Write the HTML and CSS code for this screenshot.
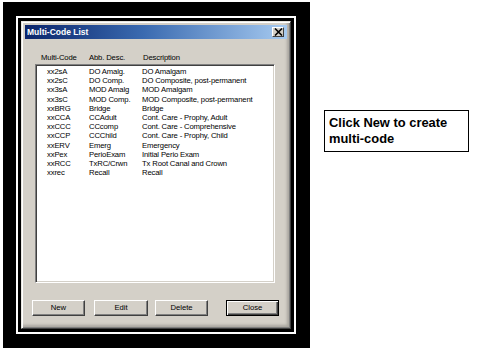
FILE: index.html
```html
<!DOCTYPE html>
<html>
<head>
<meta charset="utf-8">
<link rel="stylesheet" href="styles.css">
</head>
<body>
<div class="page">
  <div class="stage">
    <div class="whitebox">
      <div class="dialog">
        <div class="titlebar">
          <span class="title">Multi-Code List</span>
          <span class="xbtn"><svg width="9" height="8" viewBox="0 0 9 8"><path d="M1 0.5 L8 7.5 M8 0.5 L1 7.5" stroke="#000" stroke-width="1.6"/></svg></span>
        </div>
        <div class="headers">
          <span class="h1">Multi-Code</span>
          <span class="h2">Abb. Desc.</span>
          <span class="h3">Description</span>
        </div>
        <div class="list">
          <div class="row"><span>xx2sA</span><span>DO Amalg.</span><span>DO Amalgam</span></div>
          <div class="row"><span>xx2sC</span><span>DO Comp.</span><span>DO Composite, post-permanent</span></div>
          <div class="row"><span>xx3sA</span><span>MOD Amalg</span><span>MOD Amalgam</span></div>
          <div class="row"><span>xx3sC</span><span>MOD Comp.</span><span>MOD Composite, post-permanent</span></div>
          <div class="row"><span>xxBRG</span><span>Bridge</span><span>Bridge</span></div>
          <div class="row"><span>xxCCA</span><span>CCAdult</span><span>Cont. Care - Prophy, Adult</span></div>
          <div class="row"><span>xxCCC</span><span>CCcomp</span><span>Cont. Care - Comprehensive</span></div>
          <div class="row"><span>xxCCP</span><span>CCChild</span><span>Cont. Care - Prophy, Child</span></div>
          <div class="row"><span>xxERV</span><span>Emerg</span><span>Emergency</span></div>
          <div class="row"><span>xxPex</span><span>PerioExam</span><span>Initial Perio Exam</span></div>
          <div class="row"><span>xxRCC</span><span>TxRC/Crwn</span><span>Tx Root Canal and Crown</span></div>
          <div class="row"><span>xxrec</span><span>Recall</span><span>Recall</span></div>
        </div>
        <div class="buttons">
          <div class="btn b-new">New</div>
          <div class="btn b-edit">Edit</div>
          <div class="btn b-del">Delete</div>
          <div class="btn b-close">Close</div>
        </div>
      </div>
    </div>
  </div>
  <div class="callout">Click New to create<br>multi-code</div>
</div>
</body>
</html>
```

FILE: styles.css
```css
html, body {
  margin: 0;
  padding: 0;
  background: #fff;
}
.page {
  display: flex;
  align-items: flex-start;
}
.stage {
  margin: 2px 0 0 3px;
  width: 307px;
  height: 346px;
  background: #000;
  padding: 14px 0 0 13px;
  box-sizing: border-box;
}
.whitebox {
  width: 280px;
  height: 318px;
  border: 2px solid #fff;
  background: #000;
  padding: 3px;
  box-sizing: border-box;
}
.dialog {
  width: 270px;
  height: 308px;
  box-sizing: border-box;
  background: #d4d0c8;
  border-top: 1px solid #e8e6e0;
  border-left: 1px solid #e8e6e0;
  border-right: 1px solid #404040;
  border-bottom: 1px solid #404040;
  box-shadow: inset 1px 1px 0 #fff, inset -1px -1px 0 #808080, inset -3px -3px 3px #a8a59e;
  padding: 3px;
  font-family: "Liberation Sans", Arial, sans-serif;
  font-size: 7.7px;
  color: #000;
  display: flex;
  flex-direction: column;
}
.titlebar {
  height: 14px;
  background: linear-gradient(to right, #0a246a 0%, #3a6ab0 45%, #a6caf0 100%);
  display: flex;
  align-items: center;
  justify-content: space-between;
  padding: 0 3px 0 2px;
}
.title {
  color: #fff;
  font-weight: bold;
  font-size: 8.5px;
}
.xbtn {
  width: 12px;
  height: 10px;
  background: #d4d0c8;
  box-sizing: border-box;
  border-top: 1px solid #fff;
  border-left: 1px solid #fff;
  border-right: 1px solid #404040;
  border-bottom: 1px solid #404040;
  display: flex;
  align-items: center;
  justify-content: center;
}
.headers {
  margin-top: 14px;
  height: 9px;
  line-height: 9px;
  position: relative;
  margin-left: 10px;
  margin-right: 12px;
  letter-spacing: -0.15px;
}
.headers span {
  position: absolute;
  top: 0;
}
.h1 { left: 6px; }
.h2 { left: 54px; }
.h3 { left: 108px; }
.list {
  margin: 2px 12px 0 10px;
  height: 219px;
  background: #fff;
  box-sizing: border-box;
  border-top: 1px solid #808080;
  border-left: 1px solid #808080;
  border-right: 1px solid #fff;
  border-bottom: 1px solid #fff;
  box-shadow: inset 1px 1px 0 #404040, inset -1px -1px 0 #d4d0c8;
  padding: 2px 0 0 11px;
  letter-spacing: -0.15px;
}
.row {
  display: grid;
  grid-template-columns: 42px 53px 1fr;
  height: 9.2px;
  line-height: 9.2px;
  white-space: nowrap;
}
.buttons {
  display: flex;
  margin-top: 17px;
  padding-left: 7px;
}
.btn {
  height: 16px;
  line-height: 14px;
  text-align: center;
  box-sizing: border-box;
  border-top: 1px solid #fff;
  border-left: 1px solid #fff;
  border-right: 1px solid #404040;
  border-bottom: 1px solid #404040;
  box-shadow: inset -1px -1px 0 #808080;
  background: #d4d0c8;
}
.b-new { width: 53px; }
.b-edit { width: 54px; margin-left: 9px; }
.b-del { width: 53px; margin-left: 7px; }
.b-close {
  width: 53px;
  margin-left: 18px;
  border: 1px solid #000;
  box-shadow: inset 1px 1px 0 #fff, inset -1px -1px 0 #404040, inset -2px -2px 0 #808080;
}
.callout {
  margin: 110px 0 0 14px;
  width: 145px;
  height: 42px;
  box-sizing: border-box;
  border: 1px solid #000;
  padding: 4px 0 0 4px;
  font-family: "Liberation Sans", Arial, sans-serif;
  font-weight: bold;
  font-size: 12.9px;
  line-height: 16px;
  color: #000;
}
```
